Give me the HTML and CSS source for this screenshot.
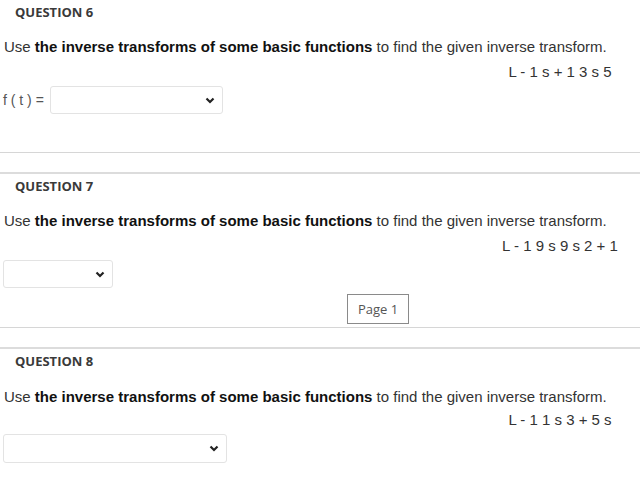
FILE: index.html
```html
<!DOCTYPE html>
<html lang="en">
<head>
    <meta charset="UTF-8">
    <meta name="viewport" content="width=device-width, initial-scale=1.0">
    <link rel="stylesheet" href="styles.css">
    <title>Quiz</title>
</head>
<body>
    <!-- Question 6 -->
    <div class="question first">
        <h3 class="q-title">QUESTION 6</h3>
        <p class="q-text">Use <b>the inverse transforms of some basic functions</b> to find the given inverse transform.</p>
        <div class="formula">L - 1 s + 1 3 s 5</div>
        <div class="answer">
            <span class="label">f ( t ) =</span>
            <div class="select wide">
                <svg width="10" height="7" viewBox="0 0 10 7"><path d="M1.5 1.5 L5 5 L8.5 1.5" fill="none" stroke="#222" stroke-width="2.2"/></svg>
            </div>
        </div>
    </div>
    <div class="divider"></div>

    <!-- Question 7 -->
    <div class="question">
        <h3 class="q-title">QUESTION 7</h3>
        <p class="q-text">Use <b>the inverse transforms of some basic functions</b> to find the given inverse transform.</p>
        <div class="formula">L - 1 9 s 9 s 2 + 1</div>
        <div class="answer">
            <div class="select small">
                <svg width="10" height="7" viewBox="0 0 10 7"><path d="M1.5 1.5 L5 5 L8.5 1.5" fill="none" stroke="#222" stroke-width="2.2"/></svg>
            </div>
        </div>
        <div class="page-box">Page 1</div>
    </div>
    <div class="divider"></div>

    <!-- Question 8 -->
    <div class="question">
        <h3 class="q-title">QUESTION 8</h3>
        <p class="q-text q8">Use <b>the inverse transforms of some basic functions</b> to find the given inverse transform.</p>
        <div class="formula f8">L - 1 1 s 3 + 5 s</div>
        <div class="answer">
            <div class="select medium">
                <svg width="10" height="7" viewBox="0 0 10 7"><path d="M1.5 1.5 L5 5 L8.5 1.5" fill="none" stroke="#222" stroke-width="2.2"/></svg>
            </div>
        </div>
    </div>
</body>
</html>
```

FILE: styles.css
```css
/* Basic reset */
* {
    margin: 0;
    padding: 0;
    box-sizing: border-box;
}
body {
    background-color: #fff;
    font-family: "Liberation Sans", Arial, sans-serif;
    color: #333;
}

.question {
    border-bottom: 1px solid #d6d6d6;
}
.question.first {
    padding-top: 3px;
}

.q-title {
    font-family: "Open Sans", sans-serif;
    font-size: 13px;
    font-weight: 700;
    line-height: 18px;
    color: #3a3a3a;
    padding-left: 15px;
}

.q-text {
    font-size: 15px;
    line-height: 18px;
    margin-top: 17px;
    padding-left: 4px;
    color: #333;
}
.q-text.q8 {
    margin-top: 18px;
}
.q-text b {
    color: #111;
}

.formula {
    width: 160px;
    margin-left: auto;
    margin-top: 7px;
    text-align: center;
    font-size: 15px;
    line-height: 18px;
    color: #333;
}
.formula.f8 {
    margin-top: 5px;
}

.answer {
    display: flex;
    align-items: center;
    margin-top: 5px;
    padding-left: 3px;
}
.label {
    font-size: 14px;
    color: #555;
    margin-right: 6px;
}

.select {
    height: 28px;
    border: 1px solid #e3e3e3;
    border-radius: 3px;
    background: #fff;
    display: flex;
    align-items: center;
    justify-content: flex-end;
    padding-right: 7px;
}
.select.wide {
    width: 173px;
}
.select.small {
    width: 110px;
}
.select.medium {
    width: 224px;
    height: 29px;
}
.question.first .answer {
    margin-bottom: 38px;
}
.question:last-child .answer {
    margin-bottom: 20px;
}

.page-box {
    width: 62px;
    height: 30px;
    margin: 6px 0 3px 347px;
    border: 1px solid #8a8a8a;
    font-family: "Open Sans", sans-serif;
    font-size: 13px;
    line-height: 28px;
    color: #555;
    text-align: center;
}

.divider {
    height: 2px;
    margin-top: 19px;
    background-color: #dcdcdc;
    margin-bottom: 3px;
}
```
